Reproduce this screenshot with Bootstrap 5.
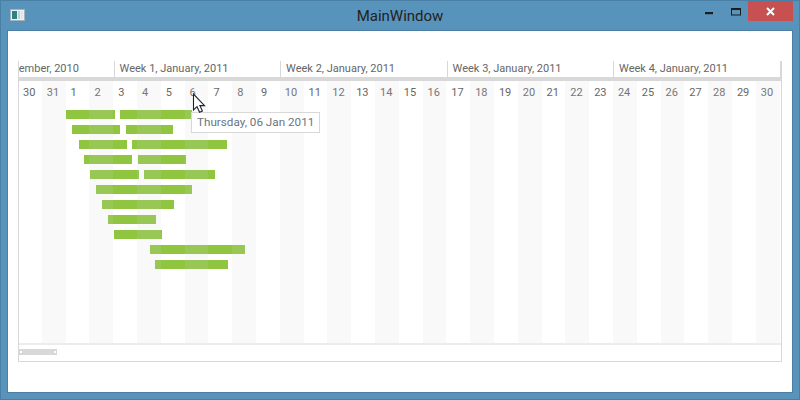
<!DOCTYPE html>
<html lang="en">
<head>
<meta charset="utf-8">
<title>MainWindow</title>
<link href="https://cdn.jsdelivr.net/npm/bootstrap@5.3.0/dist/css/bootstrap.min.css" rel="stylesheet">
<style>
html,body{margin:0;width:800px;height:400px;overflow:hidden;background:#5893bb}
.frame{width:800px;height:400px;background:#5893bb;border:1px solid #4a80a6;font-family:Roboto,"Open Sans",sans-serif}
.tbar{height:30px}
.tside{flex:1 1 0}
.appico{margin:8px 0 0 9px}
.ttitle{font-size:15px;line-height:20px;color:#222;padding-top:5px}
.capmin{width:32px;height:20px;padding:11px 0 0 9px}
.capmax{width:20px;height:20px;padding:7px 0 0 3px}
.capx{width:45px;height:20px;background:#c75050;margin:0 6px 0 0}
.client{background:#fff;margin:0 7px 7px 7px;height:361px;padding:30px 10px;box-shadow:0 0 0 1px #4a7fa3}
.chart{height:301px;width:764px;border:1px solid #d8d8d8;border-width:0 1px 1px 1px;font-size:11px;color:#666;position:relative}
.wkstrip{height:16px;overflow:hidden}
.wkcell{flex:0 0 166.5px;width:166.5px;height:16px;line-height:16px;padding-left:5px;border-right:1px solid #d8d8d8;white-space:nowrap}
.wkfirst{margin-left:-70.9px}
.hrule{height:4px;background:#d8d8d8}
.plot{height:262px;position:relative;margin-left:-1px}
.dayrow{height:29px;line-height:24px}
.daycell{flex:0 0 23.8px;width:23.8px;padding-left:5px}
.lanes{margin-left:1px}
.lane{height:9px;margin-bottom:6px}
.gbar{height:9px;background:#8fc53f}
.shades{position:absolute;inset:0;pointer-events:none}
.stripe{flex:0 0 23.8px;width:23.8px}
.stripe:nth-child(even){background:rgba(215,215,215,.15)}
.hline2{height:2px;background:#ececec}
.sbar{height:16px;padding-top:4px}
.thumb{width:38px;height:6px;background:#d8d8d8;padding:0 1px}
.tick{width:2px;height:2px;background:#fff}
.tipbox{position:absolute;left:172px;top:51px;width:129px;height:21px;background:#fff;border:1px solid #d8d8d8;line-height:19px;padding-left:5px;font-size:11.7px;color:#6c7480;white-space:nowrap}
.ptr{position:absolute;left:173px;top:32px;width:14px;height:20px}
</style>
</head>
<body>
<div class="frame d-flex flex-column">
  <div class="tbar d-flex">
    <div class="tside">
      <svg width="15" height="12" viewBox="0 0 15 12" class="d-block appico"><rect x=".5" y=".5" width="14" height="11" fill="#f0f0f0" stroke="#a8b2b8"/><rect x="2" y="2" width="5" height="8" fill="#2f7f83"/><rect x="8" y="2" width="2" height="8" fill="#bcd2d8"/><rect x="11" y="2" width="2" height="8" fill="#d9e6ea"/></svg>
    </div>
    <div class="ttitle">MainWindow</div>
    <div class="tside d-flex justify-content-end">
      <div class="capmin"><svg width="9" height="3" class="d-block"><rect width="8" height="2.2" fill="#1c1c1c"/></svg></div>
      <div class="capmax"><svg width="11" height="8" class="d-block"><rect x=".5" y="1" width="9" height="6" fill="none" stroke="#1c1c1c"/><rect width="10" height="2" fill="#1c1c1c"/></svg></div>
      <div class="capx d-flex align-items-center justify-content-center"><svg width="9" height="9" viewBox="0 0 9 9"><path d="M1 1 8 8M8 1 1 8" stroke="#fff" stroke-width="2"/></svg></div>
    </div>
  </div>
  <div class="client">
    <div class="chart">
      <div class="wkstrip d-flex">
        <div class="wkcell wkfirst">Week 52, December, 2010</div>
        <div class="wkcell">Week 1, January, 2011</div>
        <div class="wkcell">Week 2, January, 2011</div>
        <div class="wkcell">Week 3, January, 2011</div>
        <div class="wkcell">Week 4, January, 2011</div>
      </div>
      <div class="hrule"></div>
      <div class="plot">
        <div class="dayrow d-flex">
          <div class="daycell">30</div><div class="daycell">31</div><div class="daycell">1</div><div class="daycell">2</div><div class="daycell">3</div><div class="daycell">4</div><div class="daycell">5</div><div class="daycell">6</div><div class="daycell">7</div><div class="daycell">8</div><div class="daycell">9</div><div class="daycell">10</div><div class="daycell">11</div><div class="daycell">12</div><div class="daycell">13</div><div class="daycell">14</div><div class="daycell">15</div><div class="daycell">16</div><div class="daycell">17</div><div class="daycell">18</div><div class="daycell">19</div><div class="daycell">20</div><div class="daycell">21</div><div class="daycell">22</div><div class="daycell">23</div><div class="daycell">24</div><div class="daycell">25</div><div class="daycell">26</div><div class="daycell">27</div><div class="daycell">28</div><div class="daycell">29</div><div class="daycell">30</div>
        </div>
        <div class="lanes">
          <div class="lane d-flex"><div class="gbar" style="margin-left:47px;width:48.7px"></div><div class="gbar" style="margin-left:5.3px;width:72px"></div></div>
          <div class="lane d-flex"><div class="gbar" style="margin-left:53.3px;width:47.7px"></div><div class="gbar" style="margin-left:6px;width:47px"></div></div>
          <div class="lane d-flex"><div class="gbar" style="margin-left:59.5px;width:48px"></div><div class="gbar" style="margin-left:5.5px;width:95px"></div></div>
          <div class="lane d-flex"><div class="gbar" style="margin-left:65px;width:48px"></div><div class="gbar" style="margin-left:6px;width:48px"></div></div>
          <div class="lane d-flex"><div class="gbar" style="margin-left:71px;width:48.5px"></div><div class="gbar" style="margin-left:5.5px;width:71px"></div></div>
          <div class="lane d-flex"><div class="gbar" style="margin-left:77px;width:95.5px"></div></div>
          <div class="lane d-flex"><div class="gbar" style="margin-left:83px;width:71.5px"></div></div>
          <div class="lane d-flex"><div class="gbar" style="margin-left:89px;width:48px"></div></div>
          <div class="lane d-flex"><div class="gbar" style="margin-left:95px;width:47.5px"></div></div>
          <div class="lane d-flex"><div class="gbar" style="margin-left:130.5px;width:95.5px"></div></div>
          <div class="lane d-flex"><div class="gbar" style="margin-left:136px;width:73px"></div></div>
        </div>
        <div class="shades d-flex">
          <div class="stripe"></div><div class="stripe"></div><div class="stripe"></div><div class="stripe"></div><div class="stripe"></div><div class="stripe"></div><div class="stripe"></div><div class="stripe"></div><div class="stripe"></div><div class="stripe"></div><div class="stripe"></div><div class="stripe"></div><div class="stripe"></div><div class="stripe"></div><div class="stripe"></div><div class="stripe"></div><div class="stripe"></div><div class="stripe"></div><div class="stripe"></div><div class="stripe"></div><div class="stripe"></div><div class="stripe"></div><div class="stripe"></div><div class="stripe"></div><div class="stripe"></div><div class="stripe"></div><div class="stripe"></div><div class="stripe"></div><div class="stripe"></div><div class="stripe"></div><div class="stripe"></div><div class="stripe"></div>
        </div>
      </div>
      <div class="hline2"></div>
      <div class="sbar"><div class="thumb d-flex justify-content-between align-items-center"><div class="tick"></div><div class="tick"></div></div></div>
      <div class="tipbox">Thursday, 06 Jan 2011</div>
      <svg class="ptr" viewBox="0 0 14 20"><path d="M1.5 1V17L5 13.7 7.6 19.3 10.4 18 7.9 12.6H12.5Z" fill="#fff" stroke="#1b2230" stroke-width="1.1" stroke-linejoin="miter"/></svg>
    </div>
  </div>
</div>
<script src="https://cdn.jsdelivr.net/npm/bootstrap@5.3.0/dist/js/bootstrap.bundle.min.js"></script>
</body>
</html>
